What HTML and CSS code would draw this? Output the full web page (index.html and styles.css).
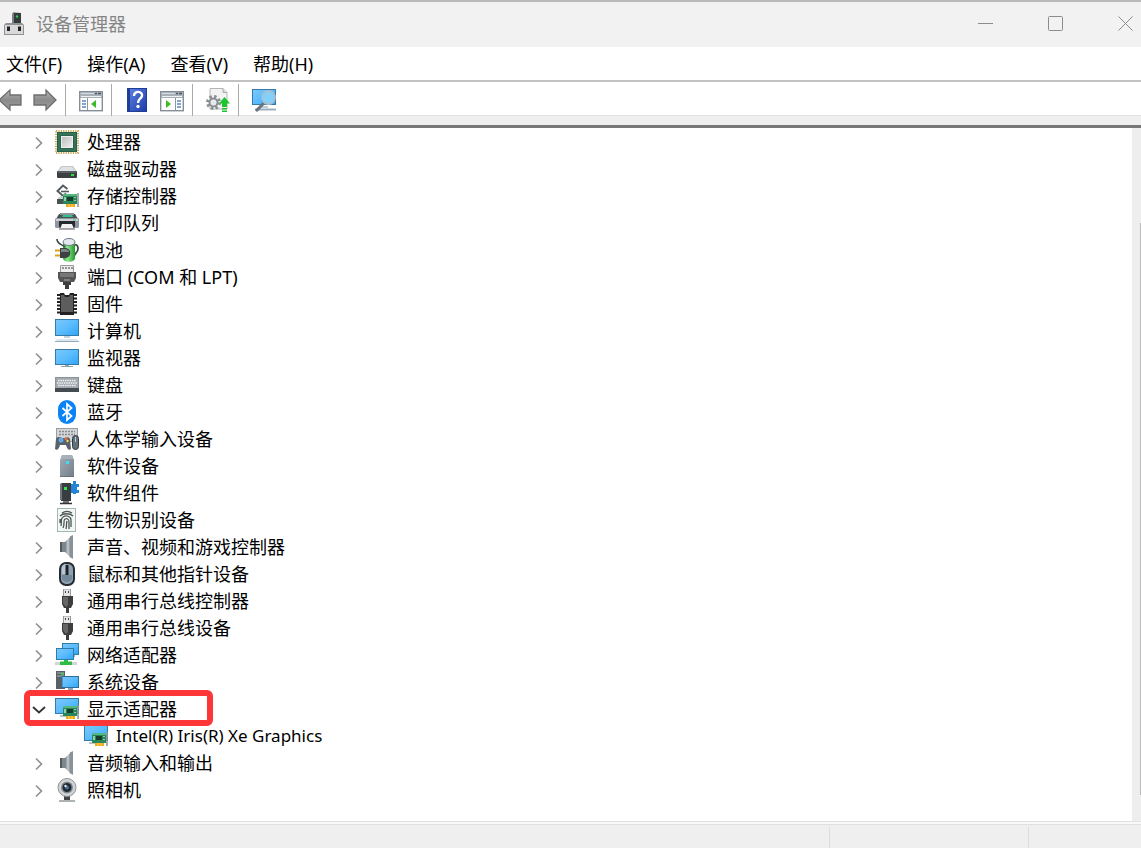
FILE: index.html
```
<!DOCTYPE html>
<html lang="zh-CN">
  <head>
    <meta charset="utf-8" />
    <title>设备管理器</title>
    <meta name="viewport" content="width=device-width, initial-scale=1.0" />
    <link rel="stylesheet" href="styles.css">
  </head>
  <body>
    <svg class="sprite" aria-hidden="true">
      <defs>
        <linearGradient id="screen" x1="0" y1="0" x2="1" y2="1"><stop offset="0" stop-color="#7cc8f8" /><stop offset=".5" stop-color="#5bbcff" /><stop offset="1" stop-color="#2fa4f5" /></linearGradient>
        <linearGradient id="silver" x1="0" y1="0" x2="1" y2="1"><stop offset="0" stop-color="#bcbcbc" /><stop offset="1" stop-color="#f0f0f0" /></linearGradient>
        <linearGradient id="steel" x1="0" y1="0" x2="1" y2="0"><stop offset="0" stop-color="#6f7880" /><stop offset=".5" stop-color="#c9cfd3" /><stop offset="1" stop-color="#69737b" /></linearGradient>
        <linearGradient id="slate" x1="0" y1="0" x2="1" y2="1"><stop offset="0" stop-color="#a4adb6" /><stop offset="1" stop-color="#737e89" /></linearGradient>
        <linearGradient id="green" x1="0" y1="0" x2="1" y2="0"><stop offset="0" stop-color="#239a2e" /><stop offset=".35" stop-color="#8fe890" /><stop offset="1" stop-color="#1f9a2b" /></linearGradient>
        <linearGradient id="arrow" x1="0" y1="0" x2="0" y2="1"><stop offset="0" stop-color="#b5b5b5" /><stop offset=".5" stop-color="#8b8b8b" /><stop offset="1" stop-color="#9c9c9c" /></linearGradient>
        <linearGradient id="help" x1="0" y1="0" x2="1" y2="1"><stop offset="0" stop-color="#5b7ee0" /><stop offset="1" stop-color="#1d3ea8" /></linearGradient>
      </defs>

      <symbol id="i-chevron" viewBox="0 0 14 14"><path d="M4 1.5l5.5 5.5L4 12.5" fill="none" stroke="#8f8f8f" stroke-width="1.6" /></symbol>
      <symbol id="i-open" viewBox="0 0 14 14"><path d="M1 4l6 5.500L13 4" fill="none" stroke="#333" stroke-width="1.8" /></symbol>

      <symbol id="i-app" viewBox="0 0 20 24">
        <path d="M9 .5l8 .5v11H9z" fill="#333b3d" /><path d="M9 .5L8 2v10h2V1z" fill="#7b8284" /><circle cx="13" cy="4.5" r="1.2" fill="#35d04a" />
        <path d="M2 11h16l2 2v10H0V13z" fill="#8f9393" /><path d="M1 13h18v9H1z" fill="#d9d9dc" />
        <path d="M3 14.500h3V19H3zm11 0h3V19h-3z" fill="#222" />
      </symbol>

      <symbol id="i-cpu" viewBox="0 0 24 24">
        <rect x="1" y="1" width="22" height="22" fill="none" stroke="#c9a75a" stroke-width="2" stroke-dasharray="1.2 1.2" />
        <rect x="2" y="2" width="20" height="20" fill="#2a6049" /><rect x="3" y="3" width="18" height="18" fill="#34735a" />
        <rect x="5.5" y="5.5" width="13" height="13" fill="#24513d" /><rect x="6.500" y="6.500" width="11" height="11" fill="url(#silver)" stroke="#eee" />
      </symbol>
      <symbol id="i-disk" viewBox="0 0 24 24">
        <path d="M6 9h12l4 6H2z" fill="#c4c9cc" /><path d="M7 10h10l3 4H4z" fill="#dfe2e4" />
        <rect x="2" y="14" width="20" height="7" rx="1" fill="#3b4043" /><path d="M3 15h18" stroke="#777d80" /><rect x="16" y="17" width="3" height="2" fill="#27e23f" />
      </symbol>
      <symbol id="i-card" viewBox="0 0 16 14">
        <path d="M15 0v14" stroke="#8d9799" stroke-width="1.600" /><path d="M3 10h9v4H3z" fill="#f2a71b" /><path d="M6 11v3M9 11v3" stroke="#ffd566" />
        <path d="M0 1h14v10H0z" fill="#27875a" /><path d="M0 1h14v2H0z" fill="#55b77f" /><path d="M4 4h6v4H4z" fill="#173c2c" /><path d="M1 4h2v4H1zm10 0h2v1h-2zm0 3h2v1h-2z" fill="#8fcfa7" />
      </symbol>
      <symbol id="i-storage" viewBox="0 0 24 24">
        <path d="M12.500 5L8 1.500 2.500 7 8 12l3-2.500" fill="none" stroke="#555b5e" stroke-width="2" /><path d="M6 7.500h8" stroke="#555b5e" stroke-width="1.600" />
        <path d="M3 14l3-2h6v3H3z" fill="#c8ccce" /><path d="M2 15h11v5H2z" fill="#4a5154" />
        <use href="#i-card" x="8" y="9" width="16" height="14" />
      </symbol>
      <symbol id="i-printer" viewBox="0 0 24 24">
        <path d="M4 3h16l3 5H1z" fill="#4a5054" /><path d="M8 4h9l1 2H7z" fill="#2fc08a" /><rect x="5" y="2" width="14" height="2" fill="#8b9499" />
        <rect x="0" y="7" width="24" height="10" rx="1.5" fill="#8f98a2" /><path d="M1 8h22v2H1z" fill="#cbd1d7" /><path d="M18 9h3" stroke="#35d05c" />
        <path d="M4 10h16v5l-1 2H5l-1-2z" fill="#25292c" /><path d="M7 13h10l2 5H5z" fill="#f1f2f3" /><path d="M4 18h16" stroke="#555" />
      </symbol>
      <symbol id="i-battery" viewBox="0 0 24 24">
        <path d="M18 7c6-2 6 5 3 8-2 2-2 6-7 7" fill="none" stroke="#42494c" stroke-width="1.800" />
        <path d="M8 4h12v16c0 5-12 5-12 0z" fill="url(#green)" /><ellipse cx="14" cy="4" rx="6" ry="3.500" fill="#e4e8ee" stroke="#727b8a" />
        <path d="M2 1c0 5 4 5 8 8" fill="none" stroke="#3f474a" stroke-width="1.600" />
        <path d="M0 12.500h6M0 17.500h6" stroke="#d9a421" stroke-width="2" /><path d="M5 10h5c7 0 7 10 0 10H5z" fill="#3c4244" /><path d="M6 11h4c3 0 4 2 4 3H6z" fill="#7d8487" />
      </symbol>
      <symbol id="i-port" viewBox="0 0 24 24">
        <path d="M5.500.500h13V8h-13z" fill="#eee" stroke="#999" /><path d="M7 3h2m1 0h2m1 0h2m1 0h2" stroke="#777" stroke-width="1.500" />
        <path d="M3 7h18v6l-2 4H5l-2-4z" fill="#555" /><path d="M5 8h14v4H5z" fill="#777" /><path d="M8 17h8v3h-2v4h-4v-4H8z" fill="#3f3f3f" /><path d="M9 15h6" stroke="#aaa" />
      </symbol>
      <symbol id="i-firmware" viewBox="0 0 24 24">
        <path d="M4 2v21M20 2v21" stroke="#222" stroke-width="4" stroke-dasharray="2 1.500" /><path d="M5 1h4l1 2h4l1-2h4v22H5z" fill="#222" /><path d="M6 3h3l1 2h4l1-2h3v17H6z" fill="#5d5d5d" />
      </symbol>
      <symbol id="i-computer" viewBox="0 0 24 24">
        <rect x=".5" y=".5" width="23" height="16" fill="url(#screen)" stroke="#367ba8" /><path d="M9 17h6v2H9z" fill="#c4d2db" /><path d="M2 20h20l2 3H0z" fill="#dce7ed" /><path d="M0 22.500h24" stroke="#92abbd" />
      </symbol>
      <symbol id="i-monitor" viewBox="0 0 24 24">
        <rect x=".5" y="3.500" width="23" height="15" fill="url(#screen)" stroke="#367ba8" /><path d="M10 19h4v1h-4z" fill="#8da3b0" /><path d="M6 20.500h12" stroke="#8da3b0" />
      </symbol>
      <symbol id="i-keyboard" viewBox="0 0 24 24">
        <rect x=".5" y="4.500" width="23" height="14" fill="#a2a8ae" stroke="#8c9399" /><path d="M3 7.500h18M2 10h20M3 12.500h18" stroke="#f5f5f5" stroke-width="1.400" stroke-dasharray="1.500 .8" /><path d="M0 15h24v4H0z" fill="#444c52" />
      </symbol>
      <symbol id="i-bluetooth" viewBox="0 0 24 24">
        <rect x="3" y="0" width="18" height="24" rx="9" fill="#0a84f5" /><path d="M7.500 8l9 8-4.500 4V4l4.500 4-9 8" fill="none" stroke="#fff" stroke-width="1.700" />
      </symbol>
      <symbol id="i-hid" viewBox="0 0 24 24">
        <rect x="1.500" y="1.500" width="21" height="13" fill="#d4d7da" stroke="#969da3" /><path d="M4 4.500h16M4 7.500h16" stroke="#888" stroke-width="1.500" stroke-dasharray="2 1" />
        <path d="M0 22l1-10c1-3 4-2 6-1h3c2-1 4-1 5 1l1 10c-2 2-4 0-5-4H5c-1 4-3 6-5 4z" fill="#59636a" /><circle cx="6" cy="13" r="2.500" fill="#5fa9e8" /><circle cx="11" cy="11.500" r="1.500" fill="#ef6d3a" /><circle cx="12.500" cy="14" r="1.200" fill="#ffd34d" />
        <rect x="17.500" y="8.500" width="6" height="14" rx="3" fill="#62707a" stroke="#343b40" /><path d="M20.500 10v5" stroke="#c2ccd3" />
      </symbol>
      <symbol id="i-device" viewBox="0 0 24 24">
        <path d="M7 1h10l2 5v17H5V6z" fill="url(#slate)" /><path d="M7 1h10l1 4H6z" fill="#a9b1b8" /><path d="M5 22.500h14" stroke="#67727b" /><rect x="11" y="7" width="3" height="3" fill="#3ddcf5" />
      </symbol>
      <symbol id="i-component" viewBox="0 0 24 24">
        <path d="M14 3h4V0h3v3h3v3h-2v3h2v3h-3v1h-3v-1h-4z" fill="#2385d5" />
        <path d="M6 2h10v18H6z" fill="#373d40" /><path d="M5 3l2-1v17H5z" fill="#6f7679" /><path d="M8 20h6v2H8z" fill="#777" /><path d="M5 22.500h12" stroke="#333" stroke-width="1.500" /><rect x="9" y="6" width="3" height="3" fill="#35e652" />
      </symbol>
      <symbol id="i-finger" viewBox="0 0 24 24">
        <rect x="2.500" y=".5" width="18" height="23" fill="#f2f6f4" stroke="#9fbab0" />
        <path d="M7 5c3-2 7-2 10 0M5 8c3-3 10-3 13 0M6 18c1-4-1-7 2-9 3-2 8-1 8 3v7M8 20c2-4 0-8 2-9 2-1 4 0 4 3v7M11 21c1-3 0-5 1-8M5 11v4" fill="none" stroke="#4b5652" stroke-width="1.300" />
      </symbol>
      <symbol id="i-sound" viewBox="0 0 24 24">
        <path d="M5 7h6v10H5z" fill="#7e878c" /><path d="M5 7h2v10H5z" fill="#50595f" /><path d="M10 7l6-6v22l-6-6z" fill="url(#steel)" /><path d="M15 1.500l3-1.500v24l-3-2z" fill="#899299" />
      </symbol>
      <symbol id="i-mouse" viewBox="0 0 24 24">
        <rect x="5" y="1" width="14" height="22" rx="6" fill="#8fa1b1" stroke="#262c31" stroke-width="2" /><path d="M7 6c0-3 2-4 4-4v10H7z" fill="#b9c6d1" /><path d="M12 3v10" stroke="#1c2227" stroke-width="3" /><path d="M7 17c2 4 8 4 10 0v-4H7z" fill="#71879a" />
      </symbol>
      <symbol id="i-usb" viewBox="0 0 24 24">
        <path d="M8.500 0h7v8h-7z" fill="#e3e5e6" stroke="#999" /><path d="M10 3h1m2 0h1" stroke="#444" stroke-width="2" />
        <path d="M7 7h11v8l-2 4h-2v5h-3v-5H9l-2-4z" fill="#3d3d3d" /><path d="M8 8h5v8l-2 2-3-4z" fill="#666" />
      </symbol>
      <symbol id="i-network" viewBox="0 0 24 24">
        <rect x="7.500" y=".5" width="16" height="11" fill="url(#screen)" stroke="#2f7eaa" /><path d="M16 12h4v2h-4z" fill="#99aab3" />
        <rect x="1.500" y="5.500" width="17" height="11" fill="url(#screen)" stroke="#2f7eaa" /><path d="M0 20.500h22" stroke="#d1d5d8" stroke-width="3" /><path d="M9 17h4v1.500h4V22H5v-3.500h4z" fill="#2fbb46" />
      </symbol>
      <symbol id="i-system" viewBox="0 0 24 24">
        <path d="M1 1h9v18H1z" fill="#596166" /><path d="M2 3h7M2 6h7" stroke="#aeb5b9" /><path d="M6 4h3" stroke="#39dc4c" stroke-width="1.500" />
        <rect x="7" y="6.500" width="16.500" height="11" fill="url(#screen)" stroke="#2e6f9a" /><path d="M13 18h5v2h-5z" fill="#8ba3b2" />
      </symbol>
      <symbol id="i-display" viewBox="0 0 24 24">
        <rect x=".5" y="1.500" width="23" height="15" fill="url(#screen)" stroke="#367ba8" /><path d="M5 18h7v2H5z" fill="#b4c4cd" /><use href="#i-card" x="8" y="8" width="16" height="14" />
      </symbol>
      <symbol id="i-camera" viewBox="0 0 24 24">
        <path d="M9 18h6v4H9z" fill="#444" /><path d="M4 23h16" stroke="#92989b" stroke-width="1.500" /><circle cx="12" cy="9.500" r="9" fill="#d1d4d6" stroke="#8b9194" /><circle cx="12" cy="9.500" r="6" fill="#858b90" /><circle cx="12" cy="9.500" r="4.500" fill="#20272e" /><circle cx="12" cy="9.500" r="2" fill="#45719c" /><circle cx="10.500" cy="8" r="1.200" fill="#e2edf8" />
      </symbol>

      <symbol id="i-back" viewBox="0 0 24 24"><path d="M1 12L12 2v5h11v10H12v5z" fill="url(#arrow)" stroke="#6d6d6d" stroke-width="1.300" /></symbol>
      <symbol id="i-forward" viewBox="0 0 24 24"><path d="M23 12L13 2v5H1v10h12v5z" fill="url(#arrow)" stroke="#6d6d6d" stroke-width="1.300" /></symbol>
      <symbol id="i-panel" viewBox="0 0 24 24">
        <rect x=".7" y="3.700" width="22.600" height="19" fill="#fff" stroke="#858d96" stroke-width="1.400" /><path d="M1 4h22v6H1z" fill="#a7afb9" /><path d="M2 8.500h20" stroke="#edf0f3" /><path d="M2 5.500h13" stroke="#d6dbe0" /><path d="M16 5.500h2m1 0h3" stroke="#4c5662" stroke-width="1.600" />
      </symbol>
      <symbol id="i-tree" viewBox="0 0 24 24">
        <use href="#i-panel" width="24" height="24" /><path d="M8.500 10v12" stroke="#8d96a0" /><path d="M3 13h4M3 16h4M3 19h4" stroke="#5787c5" stroke-width="1.500" /><path d="M17 12v8l-5-4z" fill="#40b928" />
      </symbol>
      <symbol id="i-action" viewBox="0 0 24 24">
        <use href="#i-panel" width="24" height="24" /><path d="M15.500 10v12" stroke="#8d96a0" /><path d="M17 13h4M17 16h4M17 19h4" stroke="#5787c5" stroke-width="1.500" /><path d="M6 12v8l5-4z" fill="#40b928" />
      </symbol>
      <symbol id="i-help" viewBox="0 0 24 24">
        <rect x="2" y="0" width="20" height="24" fill="#1f3e98" /><rect x="5" y="1" width="16" height="22" fill="url(#help)" /><path d="M9 8c0-6 9-5 8 0-.5 2.500-4 3-4 7" fill="none" stroke="#fff" stroke-width="2.400" /><circle cx="13" cy="18.500" r="1.700" fill="#fff" />
      </symbol>
      <symbol id="i-scan" viewBox="0 0 24 24">
        <path d="M4 .5h13l4 4V21H4z" fill="#f3f3f3" stroke="#b5b5b5" /><path d="M17 .5v4h4" fill="#ddd" stroke="#aaa" />
        <circle cx="7.500" cy="14.500" r="6" fill="none" stroke="#8a8f92" stroke-width="3" stroke-dasharray="2.400 2.300" /><circle cx="7.500" cy="14.500" r="4" fill="#e9eaeb" stroke="#8a8f92" stroke-width="2" />
        <path d="M18.500 9l5.500 6.500h-3V19h-5v-3.500h-3zM16 20h5v1.500h-5zM16 22.500h5V24h-5z" fill="#1fc52e" />
      </symbol>
      <symbol id="i-search" viewBox="0 0 24 24">
        <rect x=".5" y="1.500" width="23" height="15" fill="url(#screen)" stroke="#367ba8" /><path d="M8 18h8v2H8z" fill="#c2ced6" /><path d="M3 21.500h21" stroke="#9cafbb" stroke-width="2" /><path d="M12 15l-8 8" stroke="#69747c" stroke-width="3" /><circle cx="16.500" cy="9.500" r="6.500" fill="#83d0fb" stroke="#a8bfcd" stroke-width="1.800" />
      </symbol>
    </svg>

    <header class="titlebar">
      <svg class="app-icon"><use href="#i-app" /></svg>
      <h1>设备管理器</h1>
      <div class="controls">
        <button aria-label="最小化"><svg viewBox="0 0 16 16"><path d="M0 7.500h15" /></svg></button>
        <button aria-label="最大化"><svg viewBox="0 0 16 16"><rect x=".5" y=".5" width="14" height="14" rx="1" /></svg></button>
        <button aria-label="关闭"><svg viewBox="0 0 16 16"><path d="M.5.5l14 14m0-14l-14 14" /></svg></button>
      </div>
    </header>
    <nav class="menu">
      <button>文件(F)</button>
      <button>操作(A)</button>
      <button>查看(V)</button>
      <button>帮助(H)</button>
    </nav>
    <div class="toolbar">
      <div class="group">
        <button aria-label="后退"><svg><use href="#i-back" /></svg></button>
        <button aria-label="前进"><svg><use href="#i-forward" /></svg></button>
      </div>
      <div class="group">
        <button aria-label="显示/隐藏控制台树"><svg><use href="#i-tree" /></svg></button>
      </div>
      <div class="group">
        <button aria-label="帮助"><svg><use href="#i-help" /></svg></button>
        <button aria-label="显示/隐藏操作窗格"><svg><use href="#i-action" /></svg></button>
      </div>
      <div class="group">
        <button aria-label="更新驱动程序"><svg><use href="#i-scan" /></svg></button>
      </div>
      <div class="group">
        <button aria-label="扫描检测硬件改动"><svg><use href="#i-search" /></svg></button>
      </div>
    </div>

    <main>
      <ul class="tree">
        <li><button class="row"><svg class="chevron"><use href="#i-chevron" /></svg><svg class="icon"><use href="#i-cpu" /></svg>处理器</button></li>
        <li><button class="row"><svg class="chevron"><use href="#i-chevron" /></svg><svg class="icon"><use href="#i-disk" /></svg>磁盘驱动器</button></li>
        <li><button class="row"><svg class="chevron"><use href="#i-chevron" /></svg><svg class="icon"><use href="#i-storage" /></svg>存储控制器</button></li>
        <li><button class="row"><svg class="chevron"><use href="#i-chevron" /></svg><svg class="icon"><use href="#i-printer" /></svg>打印队列</button></li>
        <li><button class="row"><svg class="chevron"><use href="#i-chevron" /></svg><svg class="icon"><use href="#i-battery" /></svg>电池</button></li>
        <li><button class="row"><svg class="chevron"><use href="#i-chevron" /></svg><svg class="icon"><use href="#i-port" /></svg>端口 (COM 和 LPT)</button></li>
        <li><button class="row"><svg class="chevron"><use href="#i-chevron" /></svg><svg class="icon"><use href="#i-firmware" /></svg>固件</button></li>
        <li><button class="row"><svg class="chevron"><use href="#i-chevron" /></svg><svg class="icon"><use href="#i-computer" /></svg>计算机</button></li>
        <li><button class="row"><svg class="chevron"><use href="#i-chevron" /></svg><svg class="icon"><use href="#i-monitor" /></svg>监视器</button></li>
        <li><button class="row"><svg class="chevron"><use href="#i-chevron" /></svg><svg class="icon"><use href="#i-keyboard" /></svg>键盘</button></li>
        <li><button class="row"><svg class="chevron"><use href="#i-chevron" /></svg><svg class="icon"><use href="#i-bluetooth" /></svg>蓝牙</button></li>
        <li><button class="row"><svg class="chevron"><use href="#i-chevron" /></svg><svg class="icon"><use href="#i-hid" /></svg>人体学输入设备</button></li>
        <li><button class="row"><svg class="chevron"><use href="#i-chevron" /></svg><svg class="icon"><use href="#i-device" /></svg>软件设备</button></li>
        <li><button class="row"><svg class="chevron"><use href="#i-chevron" /></svg><svg class="icon"><use href="#i-component" /></svg>软件组件</button></li>
        <li><button class="row"><svg class="chevron"><use href="#i-chevron" /></svg><svg class="icon"><use href="#i-finger" /></svg>生物识别设备</button></li>
        <li><button class="row"><svg class="chevron"><use href="#i-chevron" /></svg><svg class="icon"><use href="#i-sound" /></svg>声音、视频和游戏控制器</button></li>
        <li><button class="row"><svg class="chevron"><use href="#i-chevron" /></svg><svg class="icon"><use href="#i-mouse" /></svg>鼠标和其他指针设备</button></li>
        <li><button class="row"><svg class="chevron"><use href="#i-chevron" /></svg><svg class="icon"><use href="#i-usb" /></svg>通用串行总线控制器</button></li>
        <li><button class="row"><svg class="chevron"><use href="#i-chevron" /></svg><svg class="icon"><use href="#i-usb" /></svg>通用串行总线设备</button></li>
        <li><button class="row"><svg class="chevron"><use href="#i-chevron" /></svg><svg class="icon"><use href="#i-network" /></svg>网络适配器</button></li>
        <li><button class="row"><svg class="chevron"><use href="#i-chevron" /></svg><svg class="icon"><use href="#i-system" /></svg>系统设备</button></li>
        <li>
          <button class="row marked" aria-expanded="true"><svg class="chevron"><use href="#i-open" /></svg><svg class="icon"><use href="#i-display" /></svg>显示适配器</button>
          <ul>
            <li><button class="row child"><svg class="icon"><use href="#i-display" /></svg>Intel(R) Iris(R) Xe Graphics</button></li>
          </ul>
        </li>
        <li><button class="row"><svg class="chevron"><use href="#i-chevron" /></svg><svg class="icon"><use href="#i-sound" /></svg>音频输入和输出</button></li>
        <li><button class="row"><svg class="chevron"><use href="#i-chevron" /></svg><svg class="icon"><use href="#i-camera" /></svg>照相机</button></li>
      </ul>
      <div class="scrollbar"><div class="thumb"></div></div>
    </main>
    <footer class="status">
      <div></div>
      <div></div>
      <div></div>
    </footer>
  </body>
</html>
```
FILE: styles.css
```
*,
*::after {
  box-sizing: border-box;
}
body {
  margin: 0;
  min-height: 100vh;
  display: flex;
  flex-direction: column;
  background: #fff;
  color: #000;
  font: 18px/26px "Noto Sans", "Noto Sans CJK SC", sans-serif;
}
button {
  padding: 0;
  border: 0;
  background: none;
  color: inherit;
  font: inherit;
}
svg {
  display: block;
  flex: none;
}
.sprite {
  position: absolute;
  width: 0;
  height: 0;
}
.titlebar {
  display: flex;
  align-items: center;
  height: 47px;
  padding: 0 7px 2px 4px;
  border-top: 2px solid #bababa;
  background: #f2f2f2;
  color: #858585;
}
.app-icon {
  width: 20px;
  height: 24px;
}
h1 {
  margin: 0 0 0 12px;
  font-size: 18px;
  font-weight: 400;
}
.controls {
  display: flex;
  gap: 54px;
  margin-left: auto;
}
.controls svg {
  width: 16px;
  height: 16px;
  fill: none;
  stroke: #8c8c8c;
}
.menu {
  display: flex;
  gap: 25px;
  height: 35px;
  padding: 0 6px;
  border-bottom: 2px solid #c2c2c4;
}
.toolbar {
  display: flex;
  height: 46px;
  margin-left: -2px;
  border-bottom: 3px solid #777;
  background: linear-gradient(#fff 33px, #e2e2e2 33px, #e2e2e2 34px, #efefef 34px);
}
.group {
  display: flex;
  align-items: center;
  gap: 11px;
  height: 32px;
  margin-top: 2px;
  padding: 0 8px 0 13px;
  border-right: 1px solid #aaa;
}
.group:first-child {
  padding-left: 0;
}
.group:last-child {
  border-right: 0;
}
.group svg,
.icon {
  width: 24px;
  height: 24px;
}
main {
  display: flex;
  flex: 1;
}
ul {
  margin: 0;
  padding: 0;
  list-style: none;
}
.tree {
  flex: 1;
  padding-bottom: 18px;
}
.row {
  display: flex;
  align-items: center;
  gap: 8px;
  height: 27px;
  padding-left: 32px;
  white-space: nowrap;
}
.chevron {
  width: 14px;
  height: 14px;
  margin: 2px 1px 0 0;
}
.child {
  padding-left: 84px;
  font-size: 17px;
}
.marked {
  position: relative;
}
.marked::after {
  content: "";
  position: absolute;
  left: 24px;
  right: -36px;
  top: -5px;
  height: 36px;
  border: 6px solid #fd3737;
  border-radius: 6px;
}
.scrollbar {
  display: flex;
  flex: 0 0 9px;
  justify-content: flex-end;
  padding: 95px 0 26px;
  background: #eee;
}
.thumb {
  width: 1px;
  background: #bbb;
}
.status {
  display: flex;
  height: 27px;
  padding-top: 2px;
  border-top: 1px solid #e2e2e2;
  background: linear-gradient(#f9f9f9 2px, #dfdfdf 2px, #dfdfdf 3px, #efefef 3px);
}
.status div {
  flex: 0 0 113px;
  margin-top: 3px;
  border-left: 1px solid #ddd;
}
.status div:first-child {
  flex: 1;
  border-left: 0;
}
.status div:nth-child(2) {
  flex-basis: 199px;
}
```
